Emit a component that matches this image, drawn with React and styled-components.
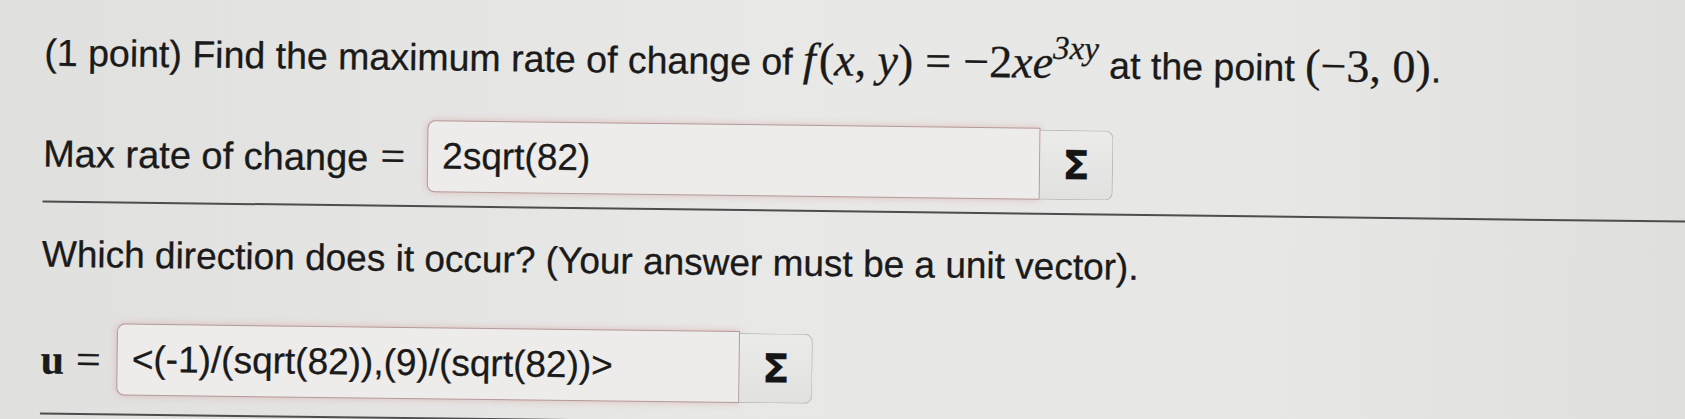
import React from 'react';
import styled, { createGlobalStyle } from 'styled-components';

const GlobalStyle = createGlobalStyle`
  html, body {
    margin: 0;
    padding: 0;
  }
  body {
    background: #e5e5e3;
    overflow: hidden;
  }
`;

// Page background (photo of a screen, slightly uneven light)
const Page = styled.div`
  width: 1685px;
  height: 419px;
  background: linear-gradient(90deg, #e0e0de 0%, #e8e8e6 45%, #e7e7e5 75%, #dfdfdd 100%);
  color: #1a1a1a;
  font-family: "Liberation Sans", Arial, sans-serif;
  -webkit-text-stroke: 0.3px #1a1a1a;
  overflow: hidden;
`;

// the photo is taken a little askew
const Sheet = styled.div`
  box-sizing: border-box;
  padding: 27px 0 0 45px;
  transform: rotate(0.7deg);
  transform-origin: 0 0;
`;

const Question = styled.p`
  margin: 0;
  margin-top: ${(p) => p.$top || 0}px;
  font-size: ${(p) => p.$size || 37}px;
  line-height: 46px;
  white-space: nowrap;
`;

// Math bits
const MathText = styled.span`
  font-family: "Liberation Serif", "Times New Roman", serif;
  font-size: 46px;
`;

const Var = styled.i`
  font-style: italic;
  margin-right: ${(p) => p.$gap || 0}px;
`;

const Rel = styled.span`
  margin: 0 12px;
`;

const Sup = styled.sup`
  font-size: 33px;
  font-style: italic;
  line-height: 0;
  vertical-align: 19px;
`;

// Answer rows
const AnswerRow = styled.div`
  display: flex;
  align-items: center;
  gap: ${(p) => p.$gap}px;
  margin-top: ${(p) => p.$top}px;
`;

const Label = styled.span`
  font-size: 38px;
  white-space: nowrap;
`;

const Equals = styled.span`
  font-family: "Liberation Serif", "Times New Roman", serif;
  font-size: 44px;
  margin-left: 12px;
`;

const BoldVec = styled.b`
  font-family: "Liberation Serif", "Times New Roman", serif;
  font-size: 42px;
  font-weight: bold;
`;

const InputGroup = styled.div`
  display: flex;
  height: 72px;
`;

const Field = styled.div`
  width: ${(p) => p.$width}px;
  box-sizing: border-box;
  display: flex;
  align-items: center;
  padding-left: 14px;
  background: #edecea;
  border: 1.5px solid #b59a9a;
  border-radius: 8px 0 0 8px;
  box-shadow: 0 0 7px rgba(210, 140, 140, 0.45);
  font-size: 37px;
  white-space: nowrap;
`;

const SigmaButton = styled.div`
  width: 73px;
  box-sizing: border-box;
  display: flex;
  align-items: center;
  justify-content: center;
  margin-top: 2px;
  background: linear-gradient(#ebebea, #e1e1e0);
  border: 1.5px solid #bcbcbc;
  border-left: none;
  border-radius: 0 8px 8px 0;
  font-family: "DejaVu Sans", sans-serif;
  font-weight: bold;
  font-size: 40px;
  color: #151515;
`;

const Rule = styled.div`
  height: 2px;
  background: #4d4d4d;
  width: ${(p) => p.$width}px;
  margin-top: ${(p) => p.$top}px;
`;

const App = () => {
  return (
    <>
      <GlobalStyle />
      <Page>
        <Sheet>
          <Question $size={37.5}>
            (1 point) Find the maximum rate of change of{' '}
            <MathText>
              <Var $gap={3}>f</Var>(<Var>x</Var>, <Var>y</Var>)<Rel>=</Rel>−2<Var>x</Var>
              <Var>e</Var>
              <Sup>3xy</Sup>
            </MathText>{' '}
            at the point <MathText>(−3, 0)</MathText>.
          </Question>

          <AnswerRow $top={40} $gap={22}>
            <Label>
              Max rate of change<Equals>=</Equals>
            </Label>
            <InputGroup>
              <Field $width={613}>2sqrt(82)</Field>
              <SigmaButton>Σ</SigmaButton>
            </InputGroup>
          </AnswerRow>
          <Rule $top={13} $width={1660} />

          <Question $top={29}>
            Which direction does it occur? (Your answer must be a unit vector).
          </Question>

          <AnswerRow $top={45} $gap={16}>
            <Label>
              <BoldVec>u</BoldVec>
              <Equals>=</Equals>
            </Label>
            <InputGroup>
              <Field $width={623}>&lt;(-1)/(sqrt(82)),(9)/(sqrt(82))&gt;</Field>
              <SigmaButton>Σ</SigmaButton>
            </InputGroup>
          </AnswerRow>
          <Rule $top={18} $width={790} />
        </Sheet>
      </Page>
    </>
  );
};

export default App;
